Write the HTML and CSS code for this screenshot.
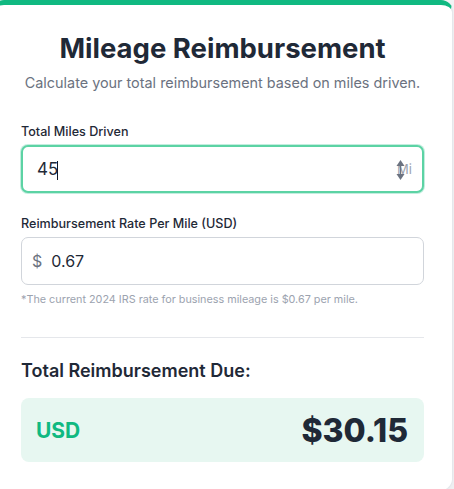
FILE: index.html
```html
<!DOCTYPE html>
<html lang="en">
<head>
    <meta charset="UTF-8">
    <meta name="viewport" content="width=device-width, initial-scale=1.0">
    <title>Mileage Reimbursement</title>
    <link rel="stylesheet" href="styles.css">
</head>
<body>

    <div class="card">
        <h1>Mileage Reimbursement</h1>
        <p class="subtitle">Calculate your total reimbursement based on miles driven.</p>

        <div class="form-group">
            <label for="miles">Total Miles Driven</label>
            <div class="input-wrap focused">
                <input type="text" id="miles" value="45">
                <span class="caret"></span>
                <span class="unit">Mi</span>
                <svg class="spinner" width="9" height="22" viewBox="0 0 9 22">
                    <path d="M4.5 1 L8.5 7 H0.5 Z" fill="#6b7280"/>
                    <rect x="3.8" y="6" width="1.4" height="10" fill="#6b7280"/>
                    <path d="M4.5 21 L8.5 15 H0.5 Z" fill="#6b7280"/>
                </svg>
            </div>
        </div>

        <div class="form-group">
            <label for="rate">Reimbursement Rate Per Mile (USD)</label>
            <div class="input-wrap">
                <span class="prefix">$</span>
                <input type="text" id="rate" value="0.67">
            </div>
            <p class="note">*The current 2024 IRS rate for business mileage is $0.67 per mile.</p>
        </div>

        <hr>

        <h2>Total Reimbursement Due:</h2>
        <div class="result">
            <span class="currency">USD</span>
            <span class="amount">$30.15</span>
        </div>
    </div>

</body>
</html>
```

FILE: styles.css
```css
html, body {
    margin: 0;
    padding: 0;
    background-color: #f3f4f6;
    font-family: 'Inter', 'Noto Sans', sans-serif;
    color: #1f2937;
}
.card {
    box-sizing: border-box;
    width: 461px;
    margin-left: -8px;
    background-color: #fff;
    border: 1px solid #e5e7eb;
    border-top: 5px solid #10b981;
    border-radius: 12px;
    padding: 26px 28px 28px 28px;
    box-shadow: 0 4px 12px rgba(0, 0, 0, 0.05);
}
h1 {
    margin: 0;
    text-align: center;
    font-size: 27.5px;
    line-height: 34px;
    font-weight: 700;
    color: #1f2937;
}
.subtitle {
    margin: 7px 0 0 0;
    text-align: center;
    font-size: 14.4px;
    line-height: 22px;
    color: #6b7280;
}
.form-group {
    margin-top: 28px;
}
.form-group + .form-group {
    margin-top: 21px;
}
.form-group label {
    display: block;
    font-size: 12.6px;
    line-height: 20px;
    font-weight: 500;
    color: #1f2937;
    margin-bottom: 3px;
}
.input-wrap {
    position: relative;
    display: flex;
    align-items: center;
    box-sizing: border-box;
    height: 48px;
    border: 1px solid #d1d5db;
    border-radius: 7px;
    padding: 0 10px;
    background-color: #fff;
}
.input-wrap.focused {
    border: 2px solid #5cd3a4;
    box-shadow: 0 0 0 1px rgba(16, 185, 129, 0.25);
    padding: 0 14px;
}
.input-wrap input {
    flex: 1;
    min-width: 0;
    border: none;
    outline: none;
    padding: 0;
    background: transparent;
    font-family: inherit;
    font-size: 16px;
    color: #1f2937;
}
#miles {
    font-size: 17px;
}
.caret {
    position: absolute;
    left: 34px;
    top: 14px;
    width: 1px;
    height: 19px;
    background-color: #111827;
}
.prefix {
    font-size: 16px;
    color: #6b7280;
    margin-right: 9px;
}
.unit {
    font-size: 13px;
    color: #9ca3af;
    margin-right: -4px;
}
.spinner {
    position: absolute;
    right: 17px;
    top: 12px;
}
.note {
    margin: 7px 0 0 0;
    font-size: 10.8px;
    line-height: 16px;
    color: #9ca3af;
}
hr {
    border: none;
    border-top: 1px solid #e5e7eb;
    margin: 29px 0 0 0;
}
h2 {
    margin: 20px 0 0 0;
    font-size: 18px;
    line-height: 26px;
    font-weight: 600;
    color: #1f2937;
}
.result {
    display: flex;
    align-items: center;
    justify-content: space-between;
    margin-top: 14px;
    height: 64px;
    padding: 0 16px 0 15px;
    background-color: #e7f7f1;
    border-radius: 8px;
}
.currency {
    font-size: 21px;
    font-weight: 700;
    color: #10b981;
}
.amount {
    font-size: 32px;
    font-weight: 800;
    color: #1f2937;
}
```
